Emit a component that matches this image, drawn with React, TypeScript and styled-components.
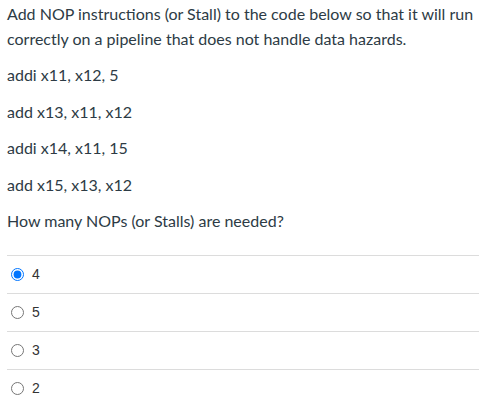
import React from "react";
import styled, { createGlobalStyle } from "styled-components";

const Global = createGlobalStyle`
  body {
    margin: 0;
    background: #fff;
  }
`;

const lines = [
  "addi x11, x12, 5",
  "add x13, x11, x12",
  "addi x14, x11, 15",
  "add x15, x13, x12",
  "How many NOPs (or Stalls) are needed?",
];

const answers = ["4", "5", "3", "2"];

export default function App() {
  return (
    <>
      <Global />
      <Question>
        <QuestionText>
          <Para>
            Add NOP instructions (or Stall) to the code below so that it will run
            correctly on a pipeline that does not handle data hazards.
          </Para>
          {lines.map((l) => (
            <Para key={l}>{l}</Para>
          ))}
        </QuestionText>
        <Answers>
          {answers.map((a, i) => (
            <AnswerRow key={a}>
              <Radio type="radio" name="nops" defaultChecked={i === 0} />
              <AnswerLabel>{a}</AnswerLabel>
            </AnswerRow>
          ))}
        </Answers>
      </Question>
    </>
  );
}

const Question = styled.div`
  padding: 2px 0 0 7px;
  color: #2d3b45;
  font-family: Lato, "Open Sans", sans-serif;
`;

const QuestionText = styled.div`
  display: flex;
  flex-direction: column;
  gap: 12px;
  font-size: 16px;
  line-height: 24.5px;
`;

const Para = styled.p`
  margin: 0;
`;

const Answers = styled.div`
  margin-top: 21px;
`;

const AnswerRow = styled.label`
  display: flex;
  align-items: center;
  height: 37px;
  border-top: 1px solid #dcdcdc;
  padding-left: 4px;
`;

const Radio = styled.input`
  width: 13px;
  height: 13px;
  margin: 0 8px 0 0;
`;

const AnswerLabel = styled.span`
  font-family: "Liberation Sans", Arial, sans-serif;
  font-size: 14px;
  color: #333;
`;
